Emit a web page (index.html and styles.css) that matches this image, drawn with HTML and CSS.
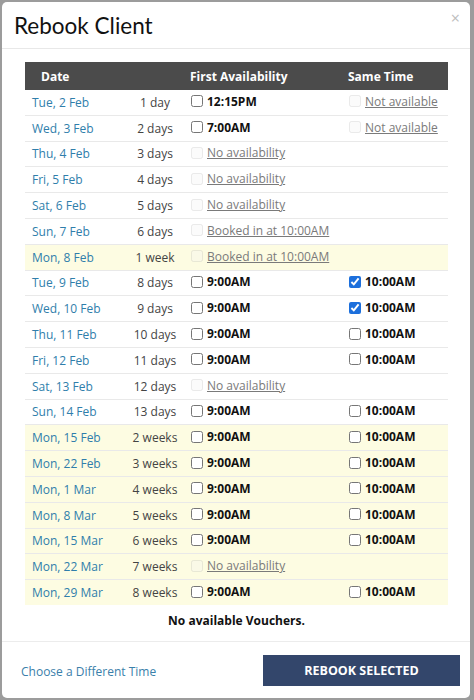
FILE: index.html
```html
<!DOCTYPE html>
<html>
<head>
<meta charset="utf-8">
<link rel="stylesheet" href="styles.css">
</head>
<body>
<div class="backdrop">
  <div class="modal">
    <div class="modal-header">
      <h1 class="title">Rebook Client</h1>
      <span class="close">×</span>
    </div>
    <div class="modal-body">
      <table class="rebook">
        <colgroup>
          <col class="c-date"><col class="c-days"><col class="c-first"><col class="c-same">
        </colgroup>
        <thead>
          <tr><th class="h-date">Date</th><th></th><th>First Availability</th><th>Same Time</th></tr>
        </thead>
        <tbody>
          <tr><td class="date">Tue, 2 Feb</td><td class="days">1 day</td><td><label class="opt"><input type="checkbox"><b>12:15PM</b></label></td><td><label class="opt off"><input type="checkbox" disabled><u>Not available</u></label></td></tr>
          <tr><td class="date">Wed, 3 Feb</td><td class="days">2 days</td><td><label class="opt"><input type="checkbox"><b>7:00AM</b></label></td><td><label class="opt off"><input type="checkbox" disabled><u>Not available</u></label></td></tr>
          <tr><td class="date">Thu, 4 Feb</td><td class="days">3 days</td><td><label class="opt off"><input type="checkbox" disabled><u>No availability</u></label></td><td></td></tr>
          <tr><td class="date">Fri, 5 Feb</td><td class="days">4 days</td><td><label class="opt off"><input type="checkbox" disabled><u>No availability</u></label></td><td></td></tr>
          <tr><td class="date">Sat, 6 Feb</td><td class="days">5 days</td><td><label class="opt off"><input type="checkbox" disabled><u>No availability</u></label></td><td></td></tr>
          <tr><td class="date">Sun, 7 Feb</td><td class="days">6 days</td><td><label class="opt off"><input type="checkbox" disabled><u>Booked in at 10:00AM</u></label></td><td></td></tr>
          <tr class="week"><td class="date">Mon, 8 Feb</td><td class="days">1 week</td><td><label class="opt off"><input type="checkbox" disabled><u>Booked in at 10:00AM</u></label></td><td></td></tr>
          <tr><td class="date">Tue, 9 Feb</td><td class="days">8 days</td><td><label class="opt"><input type="checkbox"><b>9:00AM</b></label></td><td><label class="opt"><input type="checkbox" checked><b>10:00AM</b></label></td></tr>
          <tr><td class="date">Wed, 10 Feb</td><td class="days">9 days</td><td><label class="opt"><input type="checkbox"><b>9:00AM</b></label></td><td><label class="opt"><input type="checkbox" checked><b>10:00AM</b></label></td></tr>
          <tr><td class="date">Thu, 11 Feb</td><td class="days">10 days</td><td><label class="opt"><input type="checkbox"><b>9:00AM</b></label></td><td><label class="opt"><input type="checkbox"><b>10:00AM</b></label></td></tr>
          <tr><td class="date">Fri, 12 Feb</td><td class="days">11 days</td><td><label class="opt"><input type="checkbox"><b>9:00AM</b></label></td><td><label class="opt"><input type="checkbox"><b>10:00AM</b></label></td></tr>
          <tr><td class="date">Sat, 13 Feb</td><td class="days">12 days</td><td><label class="opt off"><input type="checkbox" disabled><u>No availability</u></label></td><td></td></tr>
          <tr><td class="date">Sun, 14 Feb</td><td class="days">13 days</td><td><label class="opt"><input type="checkbox"><b>9:00AM</b></label></td><td><label class="opt"><input type="checkbox"><b>10:00AM</b></label></td></tr>
          <tr class="week"><td class="date">Mon, 15 Feb</td><td class="days">2 weeks</td><td><label class="opt"><input type="checkbox"><b>9:00AM</b></label></td><td><label class="opt"><input type="checkbox"><b>10:00AM</b></label></td></tr>
          <tr class="week"><td class="date">Mon, 22 Feb</td><td class="days">3 weeks</td><td><label class="opt"><input type="checkbox"><b>9:00AM</b></label></td><td><label class="opt"><input type="checkbox"><b>10:00AM</b></label></td></tr>
          <tr class="week"><td class="date">Mon, 1 Mar</td><td class="days">4 weeks</td><td><label class="opt"><input type="checkbox"><b>9:00AM</b></label></td><td><label class="opt"><input type="checkbox"><b>10:00AM</b></label></td></tr>
          <tr class="week"><td class="date">Mon, 8 Mar</td><td class="days">5 weeks</td><td><label class="opt"><input type="checkbox"><b>9:00AM</b></label></td><td><label class="opt"><input type="checkbox"><b>10:00AM</b></label></td></tr>
          <tr class="week"><td class="date">Mon, 15 Mar</td><td class="days">6 weeks</td><td><label class="opt"><input type="checkbox"><b>9:00AM</b></label></td><td><label class="opt"><input type="checkbox"><b>10:00AM</b></label></td></tr>
          <tr class="week"><td class="date">Mon, 22 Mar</td><td class="days">7 weeks</td><td><label class="opt off"><input type="checkbox" disabled><u>No availability</u></label></td><td></td></tr>
          <tr class="week last"><td class="date">Mon, 29 Mar</td><td class="days">8 weeks</td><td><label class="opt"><input type="checkbox"><b>9:00AM</b></label></td><td><label class="opt"><input type="checkbox"><b>10:00AM</b></label></td></tr>
        </tbody>
      </table>
      <p class="vouchers">No available Vouchers.</p>
    </div>
    <div class="modal-footer">
      <a class="alt-link" href="#">Choose a Different Time</a>
      <button class="primary" type="button">REBOOK SELECTED</button>
    </div>
  </div>
</div>
</body>
</html>
```

FILE: styles.css
```css
html, body {
  margin: 0;
  padding: 0;
}
body {
  font-family: "Open Sans", "Liberation Sans", sans-serif;
  font-size: 12px;
  color: #333;
  background: #9c9c9c;
}
.backdrop {
  width: 474px;
  height: 700px;
  box-sizing: border-box;
  padding: 2px 4px 2px 2px;
  background: #9c9c9c;
}
.modal {
  width: 468px;
  height: 696px;
  background: #fff;
  border-radius: 5px;
  display: flex;
  flex-direction: column;
  overflow: hidden;
}
.modal-header {
  height: 46px;
  border-bottom: 1px solid #e8e8e8;
  display: flex;
  align-items: center;
  justify-content: space-between;
  padding: 0 10px 0 12px;
  flex: none;
}
.title {
  margin: 2px 0 0;
  font-family: Lato, "Open Sans", sans-serif;
  font-weight: 400;
  font-size: 22.5px;
  color: #111;
  line-height: 1;
}
.close {
  font-size: 16px;
  color: #bdbdbd;
  align-self: flex-start;
  margin-top: 8px;
  line-height: 1;
}
.modal-body {
  padding: 13px 22px 12px 23px;
  flex: none;
  border-bottom: 1px solid #ececec;
}
.rebook {
  width: 423px;
  table-layout: fixed;
  border-collapse: collapse;
}
.c-date { width: 100px; }
.c-days { width: 60px; }
.c-first { width: 158px; }
.c-same { width: 105px; }
.rebook th {
  background: #4b4b4b;
  color: #fff;
  font-weight: 700;
  font-size: 12px;
  text-align: left;
  height: 28px;
  padding: 0 0 0 5px;
  vertical-align: middle;
}
.rebook th.h-date {
  padding-left: 16px;
}
.rebook td {
  height: 24.8px;
  padding: 0;
  border-bottom: 1px solid #e9e9e9;
  vertical-align: middle;
  white-space: nowrap;
}
.rebook tr.last td {
  border-bottom: none;
}
.rebook tr.week td {
  background: #fdfce2;
}
.rebook td.date {
  color: #2f7eab;
  padding-left: 7px;
}
.rebook td.days {
  text-align: center;
  color: #444;
}
.opt {
  display: flex;
  align-items: center;
  padding-left: 5px;
  margin-top: -2px;
}
.opt input {
  width: 12px;
  height: 12px;
  margin: 0 4px 0 1px;
  accent-color: #1c6fdc;
}
.opt b {
  font-weight: 700;
  color: #111;
  font-size: 12px;
}
.opt.off u {
  color: #7a7a7a;
}
.opt.off input {
  opacity: 0.45;
}
.vouchers {
  margin: 7px 0 0;
  text-align: center;
  font-weight: 700;
  color: #111;
  font-size: 12px;
}
.modal-footer {
  flex: 1;
  display: flex;
  align-items: center;
  justify-content: space-between;
  padding: 0 10px 0 19px;
}
.alt-link {
  color: #3a80aa;
  text-decoration: none;
  font-size: 12px;
  padding-top: 3px;
}
.primary {
  width: 197px;
  height: 31px;
  border: none;
  background: #33466b;
  color: #fff;
  font-family: "Open Sans", "Liberation Sans", sans-serif;
  font-weight: 700;
  font-size: 12.5px;
  margin-top: 1px;
}
```
